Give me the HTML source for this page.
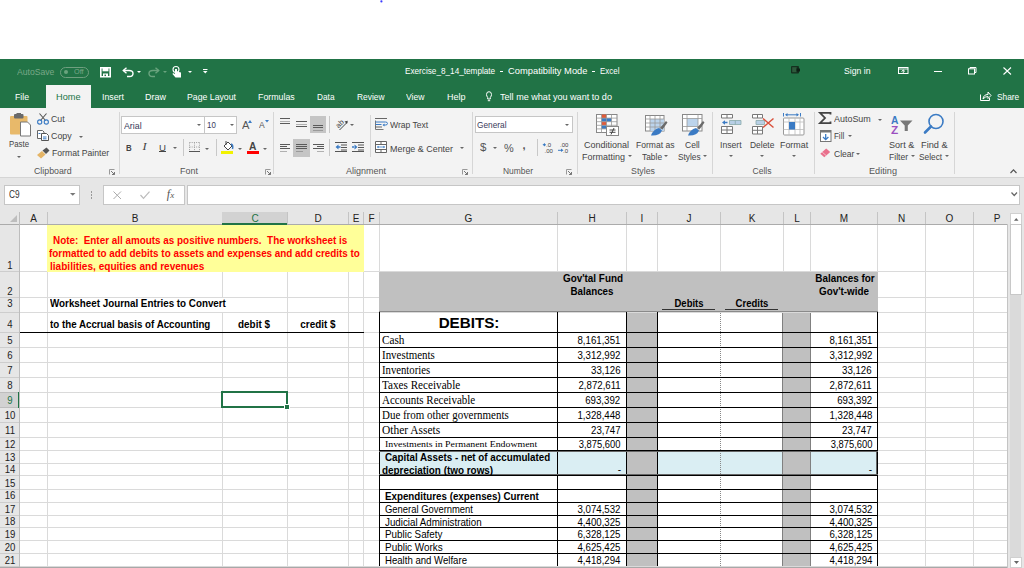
<!DOCTYPE html>
<html><head><meta charset="utf-8"><style>
html,body{margin:0;padding:0;width:1024px;height:568px;overflow:hidden;background:#fff;position:relative}
</style></head><body>
<svg style="position:absolute;left:379px;top:0px;overflow:visible" width="5" height="4" viewBox="0 0 5 4"><circle cx="2.4" cy="1.45" r="1.1" fill="#3a3aff"/></svg>
<div style="position:absolute;left:0px;top:59px;width:1024px;height:49px;background:#217346"></div>
<div style="position:absolute;left:17.3px;top:67.30px;font-family:'Liberation Sans', sans-serif;font-weight:normal;font-size:9.8px;line-height:9.8px;color:#7aa888;white-space:nowrap;transform:scaleX(0.8800);transform-origin:left top;">AutoSave</div>
<div style="position:absolute;left:60px;top:66.5px;width:28.5px;height:11px;border:1px solid #6f9f7f;border-radius:6px;box-sizing:border-box"></div>
<div style="position:absolute;left:64px;top:70px;width:4px;height:4px;background:#6aa37e;border-radius:50%"></div>
<div style="position:absolute;left:74px;top:68.00px;font-family:'Liberation Sans', sans-serif;font-weight:normal;font-size:7.8px;line-height:7.8px;color:#7aa888;white-space:nowrap;transform:scaleX(0.9357);transform-origin:left top;">Off</div>
<div style="position:absolute;left:404.6px;top:65.90px;font-family:'Liberation Sans', sans-serif;font-weight:normal;font-size:9.8px;line-height:9.8px;color:#fff;white-space:nowrap;transform:scaleX(0.8362);transform-origin:left top;">Exercise_8_14_template</div>
<div style="position:absolute;left:499.8px;top:71px;width:3px;height:1px;background:#fff"></div>
<div style="position:absolute;left:507.6px;top:65.90px;font-family:'Liberation Sans', sans-serif;font-weight:normal;font-size:9.8px;line-height:9.8px;color:#fff;white-space:nowrap;transform:scaleX(0.9540);transform-origin:left top;">Compatibility Mode</div>
<div style="position:absolute;left:592px;top:71px;width:3px;height:1px;background:#fff"></div>
<div style="position:absolute;left:599.6px;top:65.90px;font-family:'Liberation Sans', sans-serif;font-weight:normal;font-size:9.8px;line-height:9.8px;color:#fff;white-space:nowrap;transform:scaleX(0.8095);transform-origin:left top;">Excel</div>
<div style="position:absolute;left:844.3px;top:66.00px;font-family:'Liberation Sans', sans-serif;font-weight:normal;font-size:9.8px;line-height:9.8px;color:#fff;white-space:nowrap;transform:scaleX(0.8843);transform-origin:left top;">Sign in</div>
<div style="position:absolute;left:15px;top:92.07px;font-family:'Liberation Sans', sans-serif;font-weight:normal;font-size:9.6px;line-height:9.6px;color:#fff;white-space:nowrap;transform:scaleX(0.9050);transform-origin:left top;">File</div>
<div style="position:absolute;left:102px;top:92.07px;font-family:'Liberation Sans', sans-serif;font-weight:normal;font-size:9.6px;line-height:9.6px;color:#fff;white-space:nowrap;transform:scaleX(0.9163);transform-origin:left top;">Insert</div>
<div style="position:absolute;left:145px;top:92.07px;font-family:'Liberation Sans', sans-serif;font-weight:normal;font-size:9.6px;line-height:9.6px;color:#fff;white-space:nowrap;transform:scaleX(0.9374);transform-origin:left top;">Draw</div>
<div style="position:absolute;left:187px;top:92.07px;font-family:'Liberation Sans', sans-serif;font-weight:normal;font-size:9.6px;line-height:9.6px;color:#fff;white-space:nowrap;transform:scaleX(0.9089);transform-origin:left top;">Page Layout</div>
<div style="position:absolute;left:258px;top:92.07px;font-family:'Liberation Sans', sans-serif;font-weight:normal;font-size:9.6px;line-height:9.6px;color:#fff;white-space:nowrap;transform:scaleX(0.9173);transform-origin:left top;">Formulas</div>
<div style="position:absolute;left:316.5px;top:92.07px;font-family:'Liberation Sans', sans-serif;font-weight:normal;font-size:9.6px;line-height:9.6px;color:#fff;white-space:nowrap;transform:scaleX(0.8630);transform-origin:left top;">Data</div>
<div style="position:absolute;left:356.5px;top:92.07px;font-family:'Liberation Sans', sans-serif;font-weight:normal;font-size:9.6px;line-height:9.6px;color:#fff;white-space:nowrap;transform:scaleX(0.8736);transform-origin:left top;">Review</div>
<div style="position:absolute;left:405.5px;top:92.07px;font-family:'Liberation Sans', sans-serif;font-weight:normal;font-size:9.6px;line-height:9.6px;color:#fff;white-space:nowrap;transform:scaleX(0.8965);transform-origin:left top;">View</div>
<div style="position:absolute;left:446.5px;top:92.07px;font-family:'Liberation Sans', sans-serif;font-weight:normal;font-size:9.6px;line-height:9.6px;color:#fff;white-space:nowrap;transform:scaleX(0.9370);transform-origin:left top;">Help</div>
<div style="position:absolute;left:46px;top:85px;width:45px;height:23px;background:#f3f3f3"></div>
<div style="position:absolute;left:55.5px;top:92.07px;font-family:'Liberation Sans', sans-serif;font-weight:normal;font-size:9.6px;line-height:9.6px;color:#217346;white-space:nowrap;transform:scaleX(0.9567);transform-origin:left top;">Home</div>
<div style="position:absolute;left:500px;top:92.07px;font-family:'Liberation Sans', sans-serif;font-weight:normal;font-size:9.6px;line-height:9.6px;color:#fff;white-space:nowrap;transform:scaleX(0.9454);transform-origin:left top;">Tell me what you want to do</div>
<div style="position:absolute;left:996.8px;top:91.87px;font-family:'Liberation Sans', sans-serif;font-weight:normal;font-size:9.6px;line-height:9.6px;color:#fff;white-space:nowrap;transform:scaleX(0.8666);transform-origin:left top;">Share</div>
<div style="position:absolute;left:0px;top:108px;width:1024px;height:69px;background:#f3f3f3"></div>
<div style="position:absolute;left:0px;top:177px;width:1024px;height:1px;background:#d5d5d5"></div>
<div style="position:absolute;left:118.5px;top:112px;width:1px;height:62px;background:#d6d6d6"></div>
<div style="position:absolute;left:273px;top:112px;width:1px;height:62px;background:#d6d6d6"></div>
<div style="position:absolute;left:471.5px;top:112px;width:1px;height:62px;background:#d6d6d6"></div>
<div style="position:absolute;left:576.5px;top:112px;width:1px;height:62px;background:#d6d6d6"></div>
<div style="position:absolute;left:711.5px;top:112px;width:1px;height:62px;background:#d6d6d6"></div>
<div style="position:absolute;left:813.5px;top:112px;width:1px;height:62px;background:#d6d6d6"></div>
<div style="position:absolute;left:953.5px;top:112px;width:1px;height:62px;background:#d6d6d6"></div>
<div style="position:absolute;left:369.5px;top:115px;width:1px;height:42px;background:#d6d6d6"></div>
<div style="position:absolute;left:34px;top:166.51px;font-family:'Liberation Sans', sans-serif;font-weight:normal;font-size:9.2px;line-height:9.2px;color:#555;white-space:nowrap;transform:scaleX(0.9573);transform-origin:left top;">Clipboard</div>
<div style="position:absolute;left:-110.6px;width:600px;top:166.51px;font-family:'Liberation Sans', sans-serif;font-weight:normal;font-size:9.2px;line-height:9.2px;color:#555;white-space:nowrap;text-align:center;transform:scaleX(0.9723);transform-origin:center top;">Font</div>
<div style="position:absolute;left:66px;width:600px;top:166.51px;font-family:'Liberation Sans', sans-serif;font-weight:normal;font-size:9.2px;line-height:9.2px;color:#555;white-space:nowrap;text-align:center;transform:scaleX(0.9777);transform-origin:center top;">Alignment</div>
<div style="position:absolute;left:218px;width:600px;top:166.51px;font-family:'Liberation Sans', sans-serif;font-weight:normal;font-size:9.2px;line-height:9.2px;color:#555;white-space:nowrap;text-align:center;transform:scaleX(0.9168);transform-origin:center top;">Number</div>
<div style="position:absolute;left:343px;width:600px;top:166.51px;font-family:'Liberation Sans', sans-serif;font-weight:normal;font-size:9.2px;line-height:9.2px;color:#555;white-space:nowrap;text-align:center;transform:scaleX(0.9580);transform-origin:center top;">Styles</div>
<div style="position:absolute;left:462px;width:600px;top:166.51px;font-family:'Liberation Sans', sans-serif;font-weight:normal;font-size:9.2px;line-height:9.2px;color:#555;white-space:nowrap;text-align:center;transform:scaleX(0.9291);transform-origin:center top;">Cells</div>
<div style="position:absolute;left:583px;width:600px;top:166.51px;font-family:'Liberation Sans', sans-serif;font-weight:normal;font-size:9.2px;line-height:9.2px;color:#555;white-space:nowrap;text-align:center;transform:scaleX(0.9953);transform-origin:center top;">Editing</div>
<svg style="position:absolute;left:109px;top:168.5px;overflow:visible" width="6" height="6" viewBox="0 0 6 6"><path d="M0.5 5.5 V0.5 H5.5" fill="none" stroke="#999" stroke-width="1"/><path d="M2 2 L5.5 5.5 M5.5 3 V5.5 H3" fill="none" stroke="#777" stroke-width="1"/></svg>
<svg style="position:absolute;left:265px;top:168.5px;overflow:visible" width="6" height="6" viewBox="0 0 6 6"><path d="M0.5 5.5 V0.5 H5.5" fill="none" stroke="#999" stroke-width="1"/><path d="M2 2 L5.5 5.5 M5.5 3 V5.5 H3" fill="none" stroke="#777" stroke-width="1"/></svg>
<svg style="position:absolute;left:462px;top:168.5px;overflow:visible" width="6" height="6" viewBox="0 0 6 6"><path d="M0.5 5.5 V0.5 H5.5" fill="none" stroke="#999" stroke-width="1"/><path d="M2 2 L5.5 5.5 M5.5 3 V5.5 H3" fill="none" stroke="#777" stroke-width="1"/></svg>
<svg style="position:absolute;left:566px;top:168.5px;overflow:visible" width="6" height="6" viewBox="0 0 6 6"><path d="M0.5 5.5 V0.5 H5.5" fill="none" stroke="#999" stroke-width="1"/><path d="M2 2 L5.5 5.5 M5.5 3 V5.5 H3" fill="none" stroke="#777" stroke-width="1"/></svg>
<svg style="position:absolute;left:9px;top:113px;overflow:visible" width="23" height="24" viewBox="0 0 23 24"><rect x="1" y="3" width="17.5" height="18.5" rx="1" fill="#e8b96a"/><rect x="5" y="1" width="9.5" height="4.5" rx="1" fill="#6a6a6a"/><rect x="7.5" y="0" width="4.5" height="2" fill="#6a6a6a"/><path d="M11.5 9 H18.5 L21.5 12 V23 H11.5 Z" fill="#fff" stroke="#777" stroke-width="1"/></svg>
<div style="position:absolute;left:9px;top:140.18px;font-family:'Liberation Sans', sans-serif;font-weight:normal;font-size:9px;line-height:9px;color:#444;white-space:nowrap;transform:scaleX(0.8690);transform-origin:left top;">Paste</div>
<svg style="position:absolute;left:16.5px;top:155.5px" width="4" height="2.5"><path d="M0 0 L4 0 L2.0 2.0 Z" fill="#666"/></svg>
<svg style="position:absolute;left:37px;top:112.5px;overflow:visible" width="12" height="11.5" viewBox="0 0 12 11.5"><path d="M2.5 0.5 L8.5 7.5 M9.5 0.5 L3.5 7.5" stroke="#555" stroke-width="1.1" fill="none"/><circle cx="2.7" cy="9" r="2.1" fill="none" stroke="#3b7bc4" stroke-width="1.1"/><circle cx="9.3" cy="9" r="2.1" fill="none" stroke="#3b7bc4" stroke-width="1.1"/></svg>
<div style="position:absolute;left:51.2px;top:113.94px;font-family:'Liberation Sans', sans-serif;font-weight:normal;font-size:9.4px;line-height:9.4px;color:#444;white-space:nowrap;transform:scaleX(0.9366);transform-origin:left top;">Cut</div>
<svg style="position:absolute;left:37px;top:130px;overflow:visible" width="12" height="11" viewBox="0 0 12 11"><path d="M0.5 0.5 H5.5 L7 2 V8.5 H0.5 Z" fill="#fff" stroke="#666" stroke-width="1"/><path d="M4.5 3.5 H9.5 L11.5 5.5 V10.5 H4.5 Z" fill="#fff" stroke="#555" stroke-width="1"/><path d="M1.5 3.5 H3.5 M6 7 H9.5 M6 8.8 H9.5" stroke="#3b7bc4" stroke-width="1"/></svg>
<div style="position:absolute;left:51.2px;top:130.74px;font-family:'Liberation Sans', sans-serif;font-weight:normal;font-size:9.4px;line-height:9.4px;color:#444;white-space:nowrap;transform:scaleX(0.9433);transform-origin:left top;">Copy</div>
<svg style="position:absolute;left:79.0px;top:135.5px" width="4" height="2.5"><path d="M0 0 L4 0 L2.0 2.0 Z" fill="#666"/></svg>
<svg style="position:absolute;left:36.5px;top:147px;overflow:visible" width="13" height="11.5" viewBox="0 0 13 11.5"><path d="M0 8 L5 4 L8.5 7.5 L4 11.5 Z" fill="#e5b567"/><path d="M5.5 3.5 L9.5 0.5 L12.5 3.5 L9 7 Z" fill="#555"/></svg>
<div style="position:absolute;left:51.6px;top:148.44px;font-family:'Liberation Sans', sans-serif;font-weight:normal;font-size:9.4px;line-height:9.4px;color:#444;white-space:nowrap;transform:scaleX(0.9217);transform-origin:left top;">Format Painter</div>
<div style="position:absolute;left:121px;top:116px;width:116px;height:17.5px;background:#fff;border:1px solid #c6c6c6;box-sizing:border-box"></div>
<div style="position:absolute;left:204px;top:116px;width:1px;height:17.5px;background:#c6c6c6"></div>
<div style="position:absolute;left:124px;top:120.67px;font-family:'Liberation Sans', sans-serif;font-weight:normal;font-size:9.6px;line-height:9.6px;color:#3a3a5a;white-space:nowrap;transform:scaleX(0.9164);transform-origin:left top;">Arial</div>
<svg style="position:absolute;left:197.0px;top:123.6px" width="4" height="2.5"><path d="M0 0 L4 0 L2.0 2.0 Z" fill="#666"/></svg>
<div style="position:absolute;left:207.1px;top:120.47px;font-family:'Liberation Sans', sans-serif;font-weight:normal;font-size:9.6px;line-height:9.6px;color:#3a3a5a;white-space:nowrap;transform:scaleX(0.8241);transform-origin:left top;">10</div>
<svg style="position:absolute;left:229.5px;top:123.6px" width="4" height="2.5"><path d="M0 0 L4 0 L2.0 2.0 Z" fill="#666"/></svg>
<div style="position:absolute;left:241.6px;top:120.11px;font-family:'Liberation Sans', sans-serif;font-weight:normal;font-size:10.5px;line-height:10.5px;color:#555;white-space:nowrap;transform:scaleX(1.0566);transform-origin:left top;">A</div>
<svg style="position:absolute;left:248px;top:119.5px;overflow:visible" width="4" height="3" viewBox="0 0 4 3"><path d="M0 3 L4 3 L2 0 Z" fill="#3b7bc4"/></svg>
<div style="position:absolute;left:258.6px;top:122.06px;font-family:'Liberation Sans', sans-serif;font-weight:normal;font-size:8.2px;line-height:8.2px;color:#555;white-space:nowrap;transform:scaleX(1.0421);transform-origin:left top;">A</div>
<svg style="position:absolute;left:265px;top:119.5px;overflow:visible" width="4" height="2.5" viewBox="0 0 4 2.5"><path d="M0 0 L4 0 L2 2.5 Z" fill="#3b7bc4"/></svg>
<div style="position:absolute;left:126.4px;top:142.76px;font-family:'Liberation Sans', sans-serif;font-weight:bold;font-size:9.5px;line-height:9.5px;color:#444;white-space:nowrap;transform:scaleX(0.8308);transform-origin:left top;">B</div>
<div style="position:absolute;left:143px;top:142.84px;font-family:'Liberation Serif', serif;font-weight:normal;font-size:9.5px;line-height:9.5px;color:#444;white-space:nowrap;font-style:italic;transform:scaleX(1.3)">I</div>
<div style="position:absolute;left:159px;top:142.76px;font-family:'Liberation Sans', sans-serif;font-weight:normal;font-size:9.5px;line-height:9.5px;color:#444;white-space:nowrap;transform:scaleX(1.0203);transform-origin:left top;">U</div>
<div style="position:absolute;left:159px;top:151px;width:7px;height:1px;background:#444"></div>
<svg style="position:absolute;left:173.0px;top:147px" width="4" height="2.5"><path d="M0 0 L4 0 L2.0 2.0 Z" fill="#666"/></svg>
<div style="position:absolute;left:183.4px;top:139px;width:1px;height:17px;background:#c8c8c8"></div>
<svg style="position:absolute;left:189px;top:142px;overflow:visible" width="11" height="10" viewBox="0 0 11 10"><path d="M0.5 0.5 H10.5 M0.5 0.5 V9 M10.5 0.5 V9 M5.5 0.5 V9 M0.5 5 H10.5" stroke="#999" stroke-width="0.9" stroke-dasharray="1 1.2" fill="none"/><path d="M0 9.5 H11" stroke="#555" stroke-width="1"/></svg>
<svg style="position:absolute;left:205.0px;top:147.5px" width="4" height="2.5"><path d="M0 0 L4 0 L2.0 2.0 Z" fill="#666"/></svg>
<div style="position:absolute;left:215.5px;top:139px;width:1px;height:17px;background:#c8c8c8"></div>
<svg style="position:absolute;left:221px;top:141px;overflow:visible" width="13" height="10" viewBox="0 0 13 10"><path d="M3 5 L7 1 L11 5 L7 9 Z" fill="#fff" stroke="#444" stroke-width="1"/><path d="M5 0 V4" stroke="#444" stroke-width="1"/><path d="M10 3 Q12.5 4 11.5 8" stroke="#3b7bc4" stroke-width="1.5" fill="none"/></svg>
<div style="position:absolute;left:221px;top:150.7px;width:12px;height:3px;background:#f2f200"></div>
<svg style="position:absolute;left:237.5px;top:147.5px" width="4" height="2.5"><path d="M0 0 L4 0 L2.0 2.0 Z" fill="#666"/></svg>
<div style="position:absolute;left:249.2px;top:141.94px;font-family:'Liberation Sans', sans-serif;font-weight:bold;font-size:10px;line-height:10px;color:#444;white-space:nowrap;transform:scaleX(1.0247);transform-origin:left top;">A</div>
<div style="position:absolute;left:246.7px;top:150.7px;width:12.2px;height:3px;background:#ff0000"></div>
<svg style="position:absolute;left:263.0px;top:147.5px" width="4" height="2.5"><path d="M0 0 L4 0 L2.0 2.0 Z" fill="#666"/></svg>
<div style="position:absolute;left:279.6px;top:118px;width:10.5px;height:1px;background:#5a5a5a"></div>
<div style="position:absolute;left:279.6px;top:120.5px;width:10.5px;height:1px;background:#b0b0b0"></div>
<div style="position:absolute;left:279.6px;top:123px;width:10.5px;height:1px;background:#5a5a5a"></div>
<div style="position:absolute;left:296px;top:121px;width:10.5px;height:1px;background:#5a5a5a"></div>
<div style="position:absolute;left:296px;top:123.5px;width:10.5px;height:1px;background:#b0b0b0"></div>
<div style="position:absolute;left:296px;top:126px;width:10.5px;height:1px;background:#5a5a5a"></div>
<div style="position:absolute;left:310px;top:116px;width:16px;height:17px;background:#c5c5c5"></div>
<div style="position:absolute;left:312.5px;top:125px;width:10.5px;height:1px;background:#5a5a5a"></div>
<div style="position:absolute;left:312.5px;top:127.3px;width:10.5px;height:1px;background:#5a5a5a"></div>
<div style="position:absolute;left:312.5px;top:129.8px;width:10.5px;height:1px;background:#9a9a9a"></div>
<div style="position:absolute;left:329.4px;top:116px;width:1px;height:17px;background:#c8c8c8"></div>
<svg style="position:absolute;left:335px;top:118.5px;overflow:visible" width="13" height="11" viewBox="0 0 13 11"><text x="0.3" y="7.3" font-family="Liberation Sans" font-size="7.5" fill="#444" transform="rotate(-45 4.5 4.5)">ab</text><path d="M4.5 11 L12 3.5" stroke="#444" stroke-width="1"/><path d="M9.5 2.5 L12.8 1.8 L12 5 Z" fill="#444"/></svg>
<svg style="position:absolute;left:350.3px;top:124px" width="4" height="2.5"><path d="M0 0 L4 0 L2.0 2.0 Z" fill="#666"/></svg>
<div style="position:absolute;left:279.6px;top:144px;width:10.5px;height:1px;background:#5a5a5a"></div>
<div style="position:absolute;left:279.6px;top:146px;width:7px;height:1px;background:#5a5a5a"></div>
<div style="position:absolute;left:279.6px;top:148.2px;width:10.5px;height:1px;background:#5a5a5a"></div>
<div style="position:absolute;left:279.6px;top:150.5px;width:7px;height:1px;background:#b0b0b0"></div>
<div style="position:absolute;left:293px;top:139px;width:17px;height:17.5px;background:#c5c5c5"></div>
<div style="position:absolute;left:296px;top:144px;width:10.5px;height:1px;background:#5a5a5a"></div>
<div style="position:absolute;left:296px;top:146px;width:10.5px;height:1px;background:#5a5a5a"></div>
<div style="position:absolute;left:296px;top:148.2px;width:10.5px;height:1px;background:#5a5a5a"></div>
<div style="position:absolute;left:296px;top:150.5px;width:7px;height:1px;background:#9a9a9a"></div>
<div style="position:absolute;left:313px;top:144px;width:10.5px;height:1px;background:#5a5a5a"></div>
<div style="position:absolute;left:313px;top:148.2px;width:10.5px;height:1px;background:#5a5a5a"></div>
<div style="position:absolute;left:316.5px;top:146px;width:7px;height:1px;background:#5a5a5a"></div>
<div style="position:absolute;left:316.5px;top:150.5px;width:7px;height:1px;background:#b0b0b0"></div>
<div style="position:absolute;left:329.4px;top:139px;width:1px;height:17px;background:#c8c8c8"></div>
<svg style="position:absolute;left:335px;top:142px;overflow:visible" width="13" height="10" viewBox="0 0 13 10"><path d="M0 0.5 H12 M6 3 H12 M6 5.5 H12 M6 8 H12 M0 9.5 H12" stroke="#555" stroke-width="1"/><path d="M0.5 5 L3.5 2.5 V7.5 Z M3 4.2 H5.5 V5.8 H3 Z" fill="#3b7bc4"/></svg>
<svg style="position:absolute;left:351.5px;top:142px;overflow:visible" width="13" height="10" viewBox="0 0 13 10"><path d="M0 0.5 H12 M6 3 H12 M6 5.5 H12 M6 8 H12 M0 9.5 H12" stroke="#555" stroke-width="1"/><path d="M5.5 5 L2.5 2.5 V7.5 Z M0 4.2 H3 V5.8 H0 Z" fill="#3b7bc4"/></svg>
<svg style="position:absolute;left:375px;top:118px;overflow:visible" width="13" height="12" viewBox="0 0 13 12"><path d="M0.5 2.5 V11.5 H8.5" fill="none" stroke="#777" stroke-width="1"/><path d="M0 0.5 H12 M0 9 H7" stroke="#666" stroke-width="1"/><path d="M0.5 4 H10.5 M0.5 6.5 H6.5" stroke="#3b7bc4" stroke-width="1"/><path d="M10.5 4 Q12.5 4 12.5 5.5 Q12.5 7 10.5 7 H8.5" stroke="#3b7bc4" stroke-width="1" fill="none"/><path d="M7.5 7 L9.5 5.5 V8.5 Z" fill="#3b7bc4"/></svg>
<div style="position:absolute;left:389.5px;top:119.84px;font-family:'Liberation Sans', sans-serif;font-weight:normal;font-size:9.4px;line-height:9.4px;color:#444;white-space:nowrap;transform:scaleX(0.9126);transform-origin:left top;">Wrap Text</div>
<svg style="position:absolute;left:375px;top:141px;overflow:visible" width="12" height="12" viewBox="0 0 12 12"><path d="M0.5 0.5 H11.5 V11.5 H0.5 Z" fill="#fff" stroke="#666" stroke-width="1"/><path d="M0.5 3.5 H11.5 M0.5 8.5 H11.5 M6 0.5 V3.5 M6 8.5 V11.5" stroke="#666" stroke-width="1"/><path d="M2.5 6 H9.5" stroke="#3b7bc4" stroke-width="0.8"/><path d="M1.8 6 L3.6 4.8 V7.2 Z M10.2 6 L8.4 4.8 V7.2 Z" fill="#3b7bc4"/></svg>
<div style="position:absolute;left:389.7px;top:143.54px;font-family:'Liberation Sans', sans-serif;font-weight:normal;font-size:9.4px;line-height:9.4px;color:#444;white-space:nowrap;transform:scaleX(0.9525);transform-origin:left top;">Merge &amp; Center</div>
<svg style="position:absolute;left:460.0px;top:147.4px" width="4" height="2.5"><path d="M0 0 L4 0 L2.0 2.0 Z" fill="#666"/></svg>
<div style="position:absolute;left:474.5px;top:116.3px;width:98.2px;height:17px;background:#fff;border:1px solid #c6c6c6;box-sizing:border-box"></div>
<div style="position:absolute;left:477px;top:120.37px;font-family:'Liberation Sans', sans-serif;font-weight:normal;font-size:9.6px;line-height:9.6px;color:#3a3a5a;white-space:nowrap;transform:scaleX(0.8637);transform-origin:left top;">General</div>
<svg style="position:absolute;left:565.2px;top:123.6px" width="4" height="2.5"><path d="M0 0 L4 0 L2.0 2.0 Z" fill="#666"/></svg>
<div style="position:absolute;left:480.2px;top:142.29px;font-family:'Liberation Sans', sans-serif;font-weight:normal;font-size:11px;line-height:11px;color:#555;white-space:nowrap;transform:scaleX(1.0461);transform-origin:left top;">$</div>
<svg style="position:absolute;left:493.2px;top:147.4px" width="4" height="2.5"><path d="M0 0 L4 0 L2.0 2.0 Z" fill="#666"/></svg>
<div style="position:absolute;left:503.8px;top:143.64px;font-family:'Liberation Sans', sans-serif;font-weight:normal;font-size:10px;line-height:10px;color:#555;white-space:nowrap;transform:scaleX(1.0909);transform-origin:left top;">%</div>
<div style="position:absolute;left:522.5px;top:140.29px;font-family:'Liberation Sans', sans-serif;font-weight:bold;font-size:11px;line-height:11px;color:#555;white-space:nowrap;">,</div>
<div style="position:absolute;left:536.6px;top:139px;width:1px;height:17px;background:#c8c8c8"></div>
<svg style="position:absolute;left:541.5px;top:142px;overflow:visible" width="12" height="11" viewBox="0 0 12 11"><text x="4" y="5" font-family="Liberation Sans" font-size="6" fill="#444">.0</text><text x="2.5" y="10.5" font-family="Liberation Sans" font-size="6" fill="#444">.00</text><path d="M0.5 2.8 L3 1 V4.6 Z" fill="#3b7bc4"/><path d="M2 2.8 H4" stroke="#3b7bc4"/></svg>
<svg style="position:absolute;left:558px;top:142px;overflow:visible" width="12" height="11" viewBox="0 0 12 11"><text x="2" y="5" font-family="Liberation Sans" font-size="6" fill="#444">.00</text><text x="5" y="10.5" font-family="Liberation Sans" font-size="6" fill="#444">.0</text><path d="M5.5 8.3 L3 6.5 V10 Z" fill="#3b7bc4"/><path d="M0 8.3 H4" stroke="#3b7bc4"/></svg>
<svg style="position:absolute;left:596px;top:114px;overflow:visible" width="23" height="22" viewBox="0 0 23 22"><rect x="0.5" y="0.5" width="20.5" height="18" fill="#fff" stroke="#888" stroke-width="1"/><rect x="5.5" y="0.5" width="5" height="3.6" fill="#e05b3a"/><rect x="5.5" y="4.1" width="10" height="3.6" fill="#3b7bc4"/><rect x="5.5" y="7.7" width="5" height="3.6" fill="#e05b3a"/><rect x="5.5" y="11.3" width="5" height="3.6" fill="#3b7bc4"/><path d="M0.5 4.1 H21 M0.5 7.7 H21 M0.5 11.3 H21 M0.5 14.9 H21 M5.5 0.5 V18.5 M10.5 0.5 V18.5 M15.5 0.5 V18.5" stroke="#999" stroke-width="0.8" fill="none"/><rect x="10.5" y="12.5" width="12" height="9" fill="#fff" stroke="#888" stroke-width="1"/><path d="M13.5 16 H19.5 M13.5 18.3 H19.5 M18 14 L15 20.5" stroke="#333" stroke-width="0.9"/></svg>
<div style="position:absolute;left:583.9px;top:140.14px;font-family:'Liberation Sans', sans-serif;font-weight:normal;font-size:9.4px;line-height:9.4px;color:#444;white-space:nowrap;transform:scaleX(0.9589);transform-origin:left top;">Conditional</div>
<div style="position:absolute;left:582px;top:151.84px;font-family:'Liberation Sans', sans-serif;font-weight:normal;font-size:9.4px;line-height:9.4px;color:#444;white-space:nowrap;transform:scaleX(0.9571);transform-origin:left top;">Formatting</div>
<svg style="position:absolute;left:627.5px;top:155px" width="4" height="2.5"><path d="M0 0 L4 0 L2.0 2.0 Z" fill="#666"/></svg>
<svg style="position:absolute;left:644.5px;top:115px;overflow:visible" width="23" height="22" viewBox="0 0 23 22"><rect x="0.5" y="0.5" width="18.5" height="15.5" fill="#fff" stroke="#888" stroke-width="1"/><rect x="5" y="4" width="14" height="12" fill="#bcd4ec"/><path d="M0.5 4 H19 M0.5 8 H19 M0.5 12 H19 M5 0.5 V16 M10 0.5 V16 M15 0.5 V16" stroke="#999" stroke-width="0.8" fill="none"/><path d="M15 13 L21 6 L22.5 7.5 L17.5 14.5 Z" fill="#6a6a6a"/><path d="M6 20.5 Q8 14.5 14 13 L17 15.5 Q15 21 6 20.5 Z" fill="#3b7bc4"/></svg>
<div style="position:absolute;left:635.6px;top:140.14px;font-family:'Liberation Sans', sans-serif;font-weight:normal;font-size:9.4px;line-height:9.4px;color:#444;white-space:nowrap;transform:scaleX(0.9123);transform-origin:left top;">Format as</div>
<div style="position:absolute;left:641.7px;top:151.84px;font-family:'Liberation Sans', sans-serif;font-weight:normal;font-size:9.4px;line-height:9.4px;color:#444;white-space:nowrap;transform:scaleX(0.8944);transform-origin:left top;">Table</div>
<svg style="position:absolute;left:663.5px;top:155px" width="4" height="2.5"><path d="M0 0 L4 0 L2.0 2.0 Z" fill="#666"/></svg>
<svg style="position:absolute;left:682px;top:114px;overflow:visible" width="23" height="22" viewBox="0 0 23 22"><rect x="0.5" y="0.5" width="19.5" height="16.5" fill="#fff" stroke="#888" stroke-width="1"/><rect x="5" y="4.5" width="11" height="8" fill="#bcd4ec"/><path d="M0.5 4.5 H20 M0.5 12.5 H20 M5 0.5 V17 M16 0.5 V17" stroke="#999" stroke-width="0.8" fill="none"/><path d="M15 14 L21 7 L22.5 8.5 L17.5 15.5 Z" fill="#6a6a6a"/><path d="M6 21.5 Q8 15.5 14 14 L17 16.5 Q15 22 6 21.5 Z" fill="#3b7bc4"/></svg>
<div style="position:absolute;left:684.7px;top:140.14px;font-family:'Liberation Sans', sans-serif;font-weight:normal;font-size:9.4px;line-height:9.4px;color:#444;white-space:nowrap;transform:scaleX(0.9139);transform-origin:left top;">Cell</div>
<div style="position:absolute;left:677.7px;top:151.84px;font-family:'Liberation Sans', sans-serif;font-weight:normal;font-size:9.4px;line-height:9.4px;color:#444;white-space:nowrap;transform:scaleX(0.8868);transform-origin:left top;">Styles</div>
<svg style="position:absolute;left:702.5px;top:155px" width="4" height="2.5"><path d="M0 0 L4 0 L2.0 2.0 Z" fill="#666"/></svg>
<svg style="position:absolute;left:721px;top:114px;overflow:visible" width="21" height="21" viewBox="0 0 21 21"><path d="M0.5 0.5 H11.5 V4 H0.5 Z M6 0.5 V4" fill="#fff" stroke="#777" stroke-width="1"/><path d="M8.5 6.5 H20 V10.5 H8.5 Z" fill="#b8cfe6" stroke="#8aa" stroke-width="0.8"/><path d="M14.3 6.5 V10.5" stroke="#8aa" stroke-width="0.8"/><path d="M1 8.5 L4 6.3 V10.7 Z M3.5 7.8 H6.5 V9.2 H3.5 Z" fill="#3b7bc4"/><path d="M0.5 12.5 H11.5 V19.5 H0.5 Z M6 12.5 V19.5 M0.5 16 H11.5" fill="#fff" stroke="#777" stroke-width="1"/></svg>
<div style="position:absolute;left:719.6px;top:139.74px;font-family:'Liberation Sans', sans-serif;font-weight:normal;font-size:9.4px;line-height:9.4px;color:#444;white-space:nowrap;transform:scaleX(0.9188);transform-origin:left top;">Insert</div>
<svg style="position:absolute;left:728.5px;top:155.2px" width="4" height="2.5"><path d="M0 0 L4 0 L2.0 2.0 Z" fill="#666"/></svg>
<svg style="position:absolute;left:752px;top:114px;overflow:visible" width="23" height="21" viewBox="0 0 23 21"><path d="M0.5 0.5 H10.5 V4 H0.5 Z M5.5 0.5 V4" fill="#fff" stroke="#777" stroke-width="1"/><path d="M4 6.5 H12.5 V10.5 H4 Z" fill="#b8cfe6" stroke="#8aa" stroke-width="0.8"/><path d="M0.5 12.5 H10.5 V20 H0.5 Z M5.5 12.5 V20 M0.5 16.3 H10.5" fill="#fff" stroke="#777" stroke-width="1"/><path d="M11 4.5 L21.5 13.5 M21.5 4.5 L11 13.5" stroke="#d9513c" stroke-width="1.5"/></svg>
<div style="position:absolute;left:749.8px;top:139.74px;font-family:'Liberation Sans', sans-serif;font-weight:normal;font-size:9.4px;line-height:9.4px;color:#444;white-space:nowrap;transform:scaleX(0.8980);transform-origin:left top;">Delete</div>
<svg style="position:absolute;left:759.8px;top:155.2px" width="4" height="2.5"><path d="M0 0 L4 0 L2.0 2.0 Z" fill="#666"/></svg>
<svg style="position:absolute;left:783px;top:113px;overflow:visible" width="22" height="23" viewBox="0 0 22 23"><path d="M0.5 0 V3.5 M17.5 0 V3.5" stroke="#3b7bc4" stroke-width="1"/><path d="M3 1.8 H15" stroke="#3b7bc4" stroke-width="1"/><path d="M2 1.8 L4.5 0 V3.6 Z M16 1.8 L13.5 0 V3.6 Z" fill="#3b7bc4"/><rect x="0.5" y="5" width="20.5" height="17" rx="1" fill="#fff" stroke="#999" stroke-width="1"/><path d="M0.5 9 H21 M0.5 16.5 H21 M6 5 V22 M12 5 V22 M17 5 V22" stroke="#bbb" stroke-width="0.8"/><rect x="6" y="9" width="6" height="7.5" fill="#3b7bc4"/></svg>
<div style="position:absolute;left:779.8px;top:139.74px;font-family:'Liberation Sans', sans-serif;font-weight:normal;font-size:9.4px;line-height:9.4px;color:#444;white-space:nowrap;transform:scaleX(0.9472);transform-origin:left top;">Format</div>
<svg style="position:absolute;left:792.3px;top:155.2px" width="4" height="2.5"><path d="M0 0 L4 0 L2.0 2.0 Z" fill="#666"/></svg>
<svg style="position:absolute;left:819px;top:112px;overflow:visible" width="12.5" height="12" viewBox="0 0 12.5 12"><path d="M11.5 2.5 V0.8 H1 L6 6 L1 11.2 H11.5 V9.5" fill="none" stroke="#444" stroke-width="1.8" stroke-linejoin="miter"/></svg>
<div style="position:absolute;left:833.8px;top:114.14px;font-family:'Liberation Sans', sans-serif;font-weight:normal;font-size:9.4px;line-height:9.4px;color:#444;white-space:nowrap;transform:scaleX(0.9543);transform-origin:left top;">AutoSum</div>
<svg style="position:absolute;left:878.3px;top:118.8px" width="4" height="2.5"><path d="M0 0 L4 0 L2.0 2.0 Z" fill="#666"/></svg>
<svg style="position:absolute;left:819.5px;top:130px;overflow:visible" width="11.5" height="12" viewBox="0 0 11.5 12"><rect x="0.5" y="0.5" width="10.5" height="11" fill="#fff" stroke="#777" stroke-width="1"/><rect x="0.5" y="0.5" width="10.5" height="2" fill="#777"/><path d="M5.7 4 V9.5 M3 7 L5.7 9.7 L8.4 7" fill="none" stroke="#3b7bc4" stroke-width="1.3"/></svg>
<div style="position:absolute;left:833.8px;top:131.14px;font-family:'Liberation Sans', sans-serif;font-weight:normal;font-size:9.4px;line-height:9.4px;color:#444;white-space:nowrap;transform:scaleX(0.8495);transform-origin:left top;">Fill</div>
<svg style="position:absolute;left:847.5px;top:135.3px" width="4" height="2.5"><path d="M0 0 L4 0 L2.0 2.0 Z" fill="#666"/></svg>
<svg style="position:absolute;left:820px;top:148px;overflow:visible" width="10.5" height="9.5" viewBox="0 0 10.5 9.5"><path d="M0.3 5.8 L6.2 0.5 L10.2 4 L4.3 9.3 Z" fill="#e9708c"/><path d="M2.2 4.1 L6.2 7.6" stroke="#f7c5d0" stroke-width="0.9"/></svg>
<div style="position:absolute;left:833.8px;top:148.84px;font-family:'Liberation Sans', sans-serif;font-weight:normal;font-size:9.4px;line-height:9.4px;color:#444;white-space:nowrap;transform:scaleX(0.9126);transform-origin:left top;">Clear</div>
<svg style="position:absolute;left:855.5px;top:152.6px" width="4" height="2.5"><path d="M0 0 L4 0 L2.0 2.0 Z" fill="#666"/></svg>
<div style="position:absolute;left:890.6px;top:115.41px;font-family:'Liberation Sans', sans-serif;font-weight:bold;font-size:10.5px;line-height:10.5px;color:#3b7bc4;white-space:nowrap;transform:scaleX(0.9759);transform-origin:left top;">A</div>
<div style="position:absolute;left:890.8px;top:125.21px;font-family:'Liberation Sans', sans-serif;font-weight:bold;font-size:10.5px;line-height:10.5px;color:#9b4fc0;white-space:nowrap;transform:scaleX(1.1225);transform-origin:left top;">Z</div>
<svg style="position:absolute;left:900px;top:119.5px;overflow:visible" width="12.5" height="11.5" viewBox="0 0 12.5 11.5"><path d="M0 0.5 H12.5 L7.8 5.5 V11 H4.7 V5.5 Z" fill="#777"/></svg>
<div style="position:absolute;left:889.2px;top:139.74px;font-family:'Liberation Sans', sans-serif;font-weight:normal;font-size:9.4px;line-height:9.4px;color:#444;white-space:nowrap;transform:scaleX(0.9685);transform-origin:left top;">Sort &amp;</div>
<div style="position:absolute;left:889.2px;top:151.84px;font-family:'Liberation Sans', sans-serif;font-weight:normal;font-size:9.4px;line-height:9.4px;color:#444;white-space:nowrap;transform:scaleX(0.9143);transform-origin:left top;">Filter</div>
<svg style="position:absolute;left:910.5px;top:155px" width="4" height="2.5"><path d="M0 0 L4 0 L2.0 2.0 Z" fill="#666"/></svg>
<svg style="position:absolute;left:923px;top:113px;overflow:visible" width="22" height="21" viewBox="0 0 22 21"><circle cx="13" cy="8.5" r="7" fill="none" stroke="#3b7bc4" stroke-width="1.6"/><path d="M8 13.5 L2 19.5" stroke="#3b7bc4" stroke-width="2.6" stroke-linecap="round"/></svg>
<div style="position:absolute;left:920.6px;top:139.74px;font-family:'Liberation Sans', sans-serif;font-weight:normal;font-size:9.4px;line-height:9.4px;color:#444;white-space:nowrap;transform:scaleX(0.9828);transform-origin:left top;">Find &amp;</div>
<div style="position:absolute;left:919.3px;top:151.84px;font-family:'Liberation Sans', sans-serif;font-weight:normal;font-size:9.4px;line-height:9.4px;color:#444;white-space:nowrap;transform:scaleX(0.8880);transform-origin:left top;">Select</div>
<svg style="position:absolute;left:944.5px;top:155px" width="4" height="2.5"><path d="M0 0 L4 0 L2.0 2.0 Z" fill="#666"/></svg>
<svg style="position:absolute;left:1010px;top:169px;overflow:visible" width="7" height="4.5" viewBox="0 0 7 4.5"><path d="M0.5 4 L3.5 0.8 L6.5 4" fill="none" stroke="#555" stroke-width="1.2"/></svg>
<svg style="position:absolute;left:100.3px;top:66.7px;overflow:visible" width="11" height="10.5" viewBox="0 0 11 10.5"><path d="M0.8 0.8 H10.2 V9.7 H0.8 Z" fill="none" stroke="#fff" stroke-width="1.6"/><rect x="2.5" y="1" width="6" height="3.3" fill="#fff"/><rect x="3" y="6.5" width="5" height="3.5" fill="#fff"/><rect x="4.5" y="7.6" width="1.5" height="1.5" fill="#217346"/></svg>
<svg style="position:absolute;left:122px;top:67px;overflow:visible" width="12" height="10" viewBox="0 0 12 10"><path d="M1.5 3.5 H7 Q11 3.5 11 6.5 Q11 9.5 7.5 9.5 H5" fill="none" stroke="#fff" stroke-width="1.4"/><path d="M4.5 0.8 L1.3 3.5 L4.5 6.2" fill="none" stroke="#fff" stroke-width="1.4"/></svg>
<svg style="position:absolute;left:137.3px;top:70.8px" width="4" height="2.5"><path d="M0 0 L4 0 L2.0 2.0 Z" fill="#fff"/></svg>
<svg style="position:absolute;left:148.3px;top:67px;overflow:visible" width="12" height="10" viewBox="0 0 12 10"><path d="M10.5 3.5 H5 Q1 3.5 1 6.5 Q1 9.5 4.5 9.5 H7" fill="none" stroke="#6aa37e" stroke-width="1.4"/><path d="M7.5 0.8 L10.7 3.5 L7.5 6.2" fill="none" stroke="#6aa37e" stroke-width="1.4"/></svg>
<svg style="position:absolute;left:163.0px;top:70.8px" width="4" height="2.5"><path d="M0 0 L4 0 L2.0 2.0 Z" fill="#6aa37e"/></svg>
<svg style="position:absolute;left:172.4px;top:66.4px;overflow:visible" width="9.5" height="11.5" viewBox="0 0 9.5 11.5"><circle cx="4" cy="3.5" r="3" fill="none" stroke="#fff" stroke-width="1.1"/><path d="M3 3 V8 L1 7 L0.5 8 L3.5 11.5 H9 V6.5 L5 5.5 V3 Z" fill="#fff"/></svg>
<svg style="position:absolute;left:187.5px;top:70.8px" width="4" height="2.5"><path d="M0 0 L4 0 L2.0 2.0 Z" fill="#fff"/></svg>
<svg style="position:absolute;left:203px;top:69.3px;overflow:visible" width="4.5" height="4.5" viewBox="0 0 4.5 4.5"><path d="M0 0.5 H4.5" stroke="#fff" stroke-width="1"/><path d="M0 2 L4.5 2 L2.25 4.5 Z" fill="#fff"/></svg>
<svg style="position:absolute;left:791.4px;top:66px;overflow:visible" width="9" height="7.5" viewBox="0 0 9 7.5"><rect x="0" y="0" width="8" height="7.5" rx="1" fill="#15301f"/><rect x="1.2" y="1.2" width="4.5" height="5" fill="#2d5a3c"/><rect x="5.5" y="2.5" width="3.5" height="3" fill="#0d1f14"/></svg>
<svg style="position:absolute;left:898px;top:67px;overflow:visible" width="10.5" height="7" viewBox="0 0 10.5 7"><rect x="0.5" y="0.5" width="9.5" height="6" fill="none" stroke="#fff" stroke-width="1"/><path d="M0.5 2 H10 M5.25 3 V6.5 M3.5 4.5 L5.25 3 L7 4.5" stroke="#fff" stroke-width="0.9" fill="none"/></svg>
<div style="position:absolute;left:934px;top:70.5px;width:8px;height:1px;background:#fff"></div>
<svg style="position:absolute;left:968px;top:67px;overflow:visible" width="8.5" height="7.5" viewBox="0 0 8.5 7.5"><rect x="0.5" y="1.8" width="6" height="5.2" fill="none" stroke="#fff" stroke-width="1"/><path d="M2 1.8 V0.5 H8 V5.5 H6.5" fill="none" stroke="#fff" stroke-width="1"/></svg>
<svg style="position:absolute;left:1003px;top:67px;overflow:visible" width="8.5" height="8" viewBox="0 0 8.5 8"><path d="M0.5 0.5 L8 7.5 M8 0.5 L0.5 7.5" stroke="#fff" stroke-width="1.1"/></svg>
<svg style="position:absolute;left:486px;top:91px;overflow:visible" width="6" height="11" viewBox="0 0 6 11"><path d="M3 0.7 Q5.5 0.7 5.5 3.5 Q5.5 5 4.3 6.5 V8 H1.7 V6.5 Q0.5 5 0.5 3.5 Q0.5 0.7 3 0.7 Z M1.8 9.7 H4.2" fill="none" stroke="#fff" stroke-width="1"/></svg>
<svg style="position:absolute;left:979.7px;top:91px;overflow:visible" width="11.5" height="10" viewBox="0 0 11.5 10"><path d="M0.5 3.5 V9.5 H9.5 V7" fill="none" stroke="#fff" stroke-width="1"/><path d="M3 8 Q3.5 3.5 8 3.5 V1 L11 4.5 L8 7.5 V5.5 Q5 5.5 3 8 Z" fill="none" stroke="#fff" stroke-width="1"/></svg>
<div style="position:absolute;left:0px;top:178px;width:1024px;height:390px;background:#e6e6e6"></div>
<div style="position:absolute;left:4px;top:185px;width:76px;height:20px;background:#fff;border:1px solid #c6c6c6;box-sizing:border-box"></div>
<div style="position:absolute;left:9.2px;top:190.07px;font-family:'Liberation Sans', sans-serif;font-weight:normal;font-size:10.2px;line-height:10.2px;color:#333;white-space:nowrap;transform:scaleX(0.8129);transform-origin:left top;">C9</div>
<div style="position:absolute;left:103px;top:185px;width:82px;height:20px;background:#fff;border:1px solid #c6c6c6;box-sizing:border-box"></div>
<div style="position:absolute;left:187px;top:185px;width:833px;height:20px;background:#fff;border:1px solid #c6c6c6;box-sizing:border-box"></div>
<svg style="position:absolute;left:70.25px;top:192.5px" width="5.5" height="3.25"><path d="M0 0 L5.5 0 L2.75 2.75 Z" fill="#777"/></svg>
<div style="position:absolute;left:91px;top:191px;width:1px;height:1.5px;background:#999"></div>
<div style="position:absolute;left:91px;top:194px;width:1px;height:1.5px;background:#999"></div>
<div style="position:absolute;left:91px;top:197px;width:1px;height:1.5px;background:#999"></div>
<svg style="position:absolute;left:113px;top:191px;overflow:visible" width="8.5" height="8.5" viewBox="0 0 8.5 8.5"><path d="M0.5 0.5 L8 8 M8 0.5 L0.5 8" stroke="#aaa" stroke-width="1"/></svg>
<svg style="position:absolute;left:139.5px;top:191px;overflow:visible" width="10" height="8" viewBox="0 0 10 8"><path d="M0.5 4 L3.5 7.3 L9.5 0.7" fill="none" stroke="#bbb" stroke-width="1.2"/></svg>
<div style="position:absolute;left:166.8px;top:188.35px;font-family:'Liberation Serif', serif;font-weight:normal;font-size:12px;line-height:12px;color:#555;white-space:nowrap;"><i>f</i><i style="font-size:9px">x</i></div>
<svg style="position:absolute;left:1011px;top:192px;overflow:visible" width="6.5" height="4" viewBox="0 0 6.5 4"><path d="M0.5 0.5 L3.25 3.5 L6 0.5" fill="none" stroke="#666" stroke-width="1.2"/></svg>
<div style="position:absolute;left:20px;top:225px;width:987px;height:343px;background:#fff"></div>
<div style="position:absolute;left:20px;top:271px;width:987px;height:1px;background:#dadada"></div>
<div style="position:absolute;left:20px;top:297px;width:987px;height:1px;background:#dadada"></div>
<div style="position:absolute;left:20px;top:312px;width:987px;height:1px;background:#dadada"></div>
<div style="position:absolute;left:20px;top:332px;width:987px;height:1px;background:#dadada"></div>
<div style="position:absolute;left:20px;top:347px;width:987px;height:1px;background:#dadada"></div>
<div style="position:absolute;left:20px;top:362px;width:987px;height:1px;background:#dadada"></div>
<div style="position:absolute;left:20px;top:377px;width:987px;height:1px;background:#dadada"></div>
<div style="position:absolute;left:20px;top:392px;width:987px;height:1px;background:#dadada"></div>
<div style="position:absolute;left:20px;top:407px;width:987px;height:1px;background:#dadada"></div>
<div style="position:absolute;left:20px;top:422px;width:987px;height:1px;background:#dadada"></div>
<div style="position:absolute;left:20px;top:437px;width:987px;height:1px;background:#dadada"></div>
<div style="position:absolute;left:20px;top:450px;width:987px;height:1px;background:#dadada"></div>
<div style="position:absolute;left:20px;top:463px;width:987px;height:1px;background:#dadada"></div>
<div style="position:absolute;left:20px;top:475px;width:987px;height:1px;background:#dadada"></div>
<div style="position:absolute;left:20px;top:489px;width:987px;height:1px;background:#dadada"></div>
<div style="position:absolute;left:20px;top:502px;width:987px;height:1px;background:#dadada"></div>
<div style="position:absolute;left:20px;top:515px;width:987px;height:1px;background:#dadada"></div>
<div style="position:absolute;left:20px;top:527px;width:987px;height:1px;background:#dadada"></div>
<div style="position:absolute;left:20px;top:540px;width:987px;height:1px;background:#dadada"></div>
<div style="position:absolute;left:20px;top:553px;width:987px;height:1px;background:#dadada"></div>
<div style="position:absolute;left:20px;top:566px;width:987px;height:1px;background:#dadada"></div>
<div style="position:absolute;left:47px;top:225px;width:1px;height:343px;background:#dadada"></div>
<div style="position:absolute;left:222px;top:225px;width:1px;height:343px;background:#dadada"></div>
<div style="position:absolute;left:287px;top:225px;width:1px;height:343px;background:#dadada"></div>
<div style="position:absolute;left:348px;top:225px;width:1px;height:343px;background:#dadada"></div>
<div style="position:absolute;left:363px;top:225px;width:1px;height:343px;background:#dadada"></div>
<div style="position:absolute;left:379px;top:225px;width:1px;height:343px;background:#dadada"></div>
<div style="position:absolute;left:557px;top:225px;width:1px;height:343px;background:#dadada"></div>
<div style="position:absolute;left:626px;top:225px;width:1px;height:343px;background:#dadada"></div>
<div style="position:absolute;left:657px;top:225px;width:1px;height:343px;background:#dadada"></div>
<div style="position:absolute;left:720px;top:225px;width:1px;height:343px;background:#dadada"></div>
<div style="position:absolute;left:783px;top:225px;width:1px;height:343px;background:#dadada"></div>
<div style="position:absolute;left:810px;top:225px;width:1px;height:343px;background:#dadada"></div>
<div style="position:absolute;left:877px;top:225px;width:1px;height:343px;background:#dadada"></div>
<div style="position:absolute;left:925px;top:225px;width:1px;height:343px;background:#dadada"></div>
<div style="position:absolute;left:973px;top:225px;width:1px;height:343px;background:#dadada"></div>
<div style="position:absolute;left:0px;top:224px;width:1007px;height:1px;background:#ababab"></div>
<div style="position:absolute;left:19px;top:212px;width:1px;height:356px;background:#bdbdbd"></div>
<div style="position:absolute;left:47px;top:212px;width:1px;height:12px;background:#c4c4c4"></div>
<div style="position:absolute;left:222px;top:212px;width:1px;height:12px;background:#c4c4c4"></div>
<div style="position:absolute;left:287px;top:212px;width:1px;height:12px;background:#c4c4c4"></div>
<div style="position:absolute;left:348px;top:212px;width:1px;height:12px;background:#c4c4c4"></div>
<div style="position:absolute;left:363px;top:212px;width:1px;height:12px;background:#c4c4c4"></div>
<div style="position:absolute;left:379px;top:212px;width:1px;height:12px;background:#c4c4c4"></div>
<div style="position:absolute;left:557px;top:212px;width:1px;height:12px;background:#c4c4c4"></div>
<div style="position:absolute;left:626px;top:212px;width:1px;height:12px;background:#c4c4c4"></div>
<div style="position:absolute;left:657px;top:212px;width:1px;height:12px;background:#c4c4c4"></div>
<div style="position:absolute;left:720px;top:212px;width:1px;height:12px;background:#c4c4c4"></div>
<div style="position:absolute;left:783px;top:212px;width:1px;height:12px;background:#c4c4c4"></div>
<div style="position:absolute;left:810px;top:212px;width:1px;height:12px;background:#c4c4c4"></div>
<div style="position:absolute;left:877px;top:212px;width:1px;height:12px;background:#c4c4c4"></div>
<div style="position:absolute;left:925px;top:212px;width:1px;height:12px;background:#c4c4c4"></div>
<div style="position:absolute;left:973px;top:212px;width:1px;height:12px;background:#c4c4c4"></div>
<div style="position:absolute;left:-266.5px;width:600px;top:214.34px;font-family:'Liberation Sans', sans-serif;font-weight:normal;font-size:10px;line-height:10px;color:#222;white-space:nowrap;text-align:center;">A</div>
<div style="position:absolute;left:-165.0px;width:600px;top:214.34px;font-family:'Liberation Sans', sans-serif;font-weight:normal;font-size:10px;line-height:10px;color:#222;white-space:nowrap;text-align:center;">B</div>
<div style="position:absolute;left:-45.0px;width:600px;top:214.34px;font-family:'Liberation Sans', sans-serif;font-weight:normal;font-size:10px;line-height:10px;color:#222;white-space:nowrap;text-align:center;">C</div>
<div style="position:absolute;left:18.0px;width:600px;top:214.34px;font-family:'Liberation Sans', sans-serif;font-weight:normal;font-size:10px;line-height:10px;color:#222;white-space:nowrap;text-align:center;">D</div>
<div style="position:absolute;left:56.0px;width:600px;top:214.34px;font-family:'Liberation Sans', sans-serif;font-weight:normal;font-size:10px;line-height:10px;color:#222;white-space:nowrap;text-align:center;">E</div>
<div style="position:absolute;left:71.5px;width:600px;top:214.34px;font-family:'Liberation Sans', sans-serif;font-weight:normal;font-size:10px;line-height:10px;color:#222;white-space:nowrap;text-align:center;">F</div>
<div style="position:absolute;left:168.5px;width:600px;top:214.34px;font-family:'Liberation Sans', sans-serif;font-weight:normal;font-size:10px;line-height:10px;color:#222;white-space:nowrap;text-align:center;">G</div>
<div style="position:absolute;left:292.0px;width:600px;top:214.34px;font-family:'Liberation Sans', sans-serif;font-weight:normal;font-size:10px;line-height:10px;color:#222;white-space:nowrap;text-align:center;">H</div>
<div style="position:absolute;left:342.0px;width:600px;top:214.34px;font-family:'Liberation Sans', sans-serif;font-weight:normal;font-size:10px;line-height:10px;color:#222;white-space:nowrap;text-align:center;">I</div>
<div style="position:absolute;left:389.0px;width:600px;top:214.34px;font-family:'Liberation Sans', sans-serif;font-weight:normal;font-size:10px;line-height:10px;color:#222;white-space:nowrap;text-align:center;">J</div>
<div style="position:absolute;left:452.0px;width:600px;top:214.34px;font-family:'Liberation Sans', sans-serif;font-weight:normal;font-size:10px;line-height:10px;color:#222;white-space:nowrap;text-align:center;">K</div>
<div style="position:absolute;left:497.0px;width:600px;top:214.34px;font-family:'Liberation Sans', sans-serif;font-weight:normal;font-size:10px;line-height:10px;color:#222;white-space:nowrap;text-align:center;">L</div>
<div style="position:absolute;left:544.0px;width:600px;top:214.34px;font-family:'Liberation Sans', sans-serif;font-weight:normal;font-size:10px;line-height:10px;color:#222;white-space:nowrap;text-align:center;">M</div>
<div style="position:absolute;left:601.5px;width:600px;top:214.34px;font-family:'Liberation Sans', sans-serif;font-weight:normal;font-size:10px;line-height:10px;color:#222;white-space:nowrap;text-align:center;">N</div>
<div style="position:absolute;left:649.5px;width:600px;top:214.34px;font-family:'Liberation Sans', sans-serif;font-weight:normal;font-size:10px;line-height:10px;color:#222;white-space:nowrap;text-align:center;">O</div>
<div style="position:absolute;left:697.2px;width:600px;top:214.34px;font-family:'Liberation Sans', sans-serif;font-weight:normal;font-size:10px;line-height:10px;color:#222;white-space:nowrap;text-align:center;">P</div>
<div style="position:absolute;left:0px;top:271px;width:19px;height:1px;background:#cdcdcd"></div>
<div style="position:absolute;left:0px;top:297px;width:19px;height:1px;background:#cdcdcd"></div>
<div style="position:absolute;left:0px;top:312px;width:19px;height:1px;background:#cdcdcd"></div>
<div style="position:absolute;left:0px;top:332px;width:19px;height:1px;background:#cdcdcd"></div>
<div style="position:absolute;left:0px;top:347px;width:19px;height:1px;background:#cdcdcd"></div>
<div style="position:absolute;left:0px;top:362px;width:19px;height:1px;background:#cdcdcd"></div>
<div style="position:absolute;left:0px;top:377px;width:19px;height:1px;background:#cdcdcd"></div>
<div style="position:absolute;left:0px;top:392px;width:19px;height:1px;background:#cdcdcd"></div>
<div style="position:absolute;left:0px;top:407px;width:19px;height:1px;background:#cdcdcd"></div>
<div style="position:absolute;left:0px;top:422px;width:19px;height:1px;background:#cdcdcd"></div>
<div style="position:absolute;left:0px;top:437px;width:19px;height:1px;background:#cdcdcd"></div>
<div style="position:absolute;left:0px;top:450px;width:19px;height:1px;background:#cdcdcd"></div>
<div style="position:absolute;left:0px;top:463px;width:19px;height:1px;background:#cdcdcd"></div>
<div style="position:absolute;left:0px;top:475px;width:19px;height:1px;background:#cdcdcd"></div>
<div style="position:absolute;left:0px;top:489px;width:19px;height:1px;background:#cdcdcd"></div>
<div style="position:absolute;left:0px;top:502px;width:19px;height:1px;background:#cdcdcd"></div>
<div style="position:absolute;left:0px;top:515px;width:19px;height:1px;background:#cdcdcd"></div>
<div style="position:absolute;left:0px;top:527px;width:19px;height:1px;background:#cdcdcd"></div>
<div style="position:absolute;left:0px;top:540px;width:19px;height:1px;background:#cdcdcd"></div>
<div style="position:absolute;left:0px;top:553px;width:19px;height:1px;background:#cdcdcd"></div>
<div style="position:absolute;left:0px;top:566px;width:19px;height:1px;background:#cdcdcd"></div>
<div style="position:absolute;left:-290.4px;width:600px;top:260.78px;font-family:'Liberation Sans', sans-serif;font-weight:normal;font-size:10.3px;line-height:10.3px;color:#222;white-space:nowrap;text-align:center;transform:scaleX(0.9300);transform-origin:center top;">1</div>
<div style="position:absolute;left:-290.4px;width:600px;top:286.98px;font-family:'Liberation Sans', sans-serif;font-weight:normal;font-size:10.3px;line-height:10.3px;color:#222;white-space:nowrap;text-align:center;transform:scaleX(0.9300);transform-origin:center top;">2</div>
<div style="position:absolute;left:-290.4px;width:600px;top:299.18px;font-family:'Liberation Sans', sans-serif;font-weight:normal;font-size:10.3px;line-height:10.3px;color:#222;white-space:nowrap;text-align:center;transform:scaleX(0.9300);transform-origin:center top;">3</div>
<div style="position:absolute;left:-290.4px;width:600px;top:319.58px;font-family:'Liberation Sans', sans-serif;font-weight:normal;font-size:10.3px;line-height:10.3px;color:#222;white-space:nowrap;text-align:center;transform:scaleX(0.9300);transform-origin:center top;">4</div>
<div style="position:absolute;left:-290.4px;width:600px;top:335.58px;font-family:'Liberation Sans', sans-serif;font-weight:normal;font-size:10.3px;line-height:10.3px;color:#222;white-space:nowrap;text-align:center;transform:scaleX(0.9300);transform-origin:center top;">5</div>
<div style="position:absolute;left:-290.4px;width:600px;top:350.58px;font-family:'Liberation Sans', sans-serif;font-weight:normal;font-size:10.3px;line-height:10.3px;color:#222;white-space:nowrap;text-align:center;transform:scaleX(0.9300);transform-origin:center top;">6</div>
<div style="position:absolute;left:-290.4px;width:600px;top:365.68px;font-family:'Liberation Sans', sans-serif;font-weight:normal;font-size:10.3px;line-height:10.3px;color:#222;white-space:nowrap;text-align:center;transform:scaleX(0.9300);transform-origin:center top;">7</div>
<div style="position:absolute;left:-290.4px;width:600px;top:380.78px;font-family:'Liberation Sans', sans-serif;font-weight:normal;font-size:10.3px;line-height:10.3px;color:#222;white-space:nowrap;text-align:center;transform:scaleX(0.9300);transform-origin:center top;">8</div>
<div style="position:absolute;left:-290.4px;width:600px;top:410.98px;font-family:'Liberation Sans', sans-serif;font-weight:normal;font-size:10.3px;line-height:10.3px;color:#222;white-space:nowrap;text-align:center;transform:scaleX(0.9300);transform-origin:center top;">10</div>
<div style="position:absolute;left:-290.4px;width:600px;top:426.08px;font-family:'Liberation Sans', sans-serif;font-weight:normal;font-size:10.3px;line-height:10.3px;color:#222;white-space:nowrap;text-align:center;transform:scaleX(0.9300);transform-origin:center top;">11</div>
<div style="position:absolute;left:-290.4px;width:600px;top:439.78px;font-family:'Liberation Sans', sans-serif;font-weight:normal;font-size:10.3px;line-height:10.3px;color:#222;white-space:nowrap;text-align:center;transform:scaleX(0.9300);transform-origin:center top;">12</div>
<div style="position:absolute;left:-290.4px;width:600px;top:453.08px;font-family:'Liberation Sans', sans-serif;font-weight:normal;font-size:10.3px;line-height:10.3px;color:#222;white-space:nowrap;text-align:center;transform:scaleX(0.9300);transform-origin:center top;">13</div>
<div style="position:absolute;left:-290.4px;width:600px;top:464.68px;font-family:'Liberation Sans', sans-serif;font-weight:normal;font-size:10.3px;line-height:10.3px;color:#222;white-space:nowrap;text-align:center;transform:scaleX(0.9300);transform-origin:center top;">14</div>
<div style="position:absolute;left:-290.4px;width:600px;top:478.58px;font-family:'Liberation Sans', sans-serif;font-weight:normal;font-size:10.3px;line-height:10.3px;color:#222;white-space:nowrap;text-align:center;transform:scaleX(0.9300);transform-origin:center top;">15</div>
<div style="position:absolute;left:-290.4px;width:600px;top:490.78px;font-family:'Liberation Sans', sans-serif;font-weight:normal;font-size:10.3px;line-height:10.3px;color:#222;white-space:nowrap;text-align:center;transform:scaleX(0.9300);transform-origin:center top;">16</div>
<div style="position:absolute;left:-290.4px;width:600px;top:504.78px;font-family:'Liberation Sans', sans-serif;font-weight:normal;font-size:10.3px;line-height:10.3px;color:#222;white-space:nowrap;text-align:center;transform:scaleX(0.9300);transform-origin:center top;">17</div>
<div style="position:absolute;left:-290.4px;width:600px;top:517.38px;font-family:'Liberation Sans', sans-serif;font-weight:normal;font-size:10.3px;line-height:10.3px;color:#222;white-space:nowrap;text-align:center;transform:scaleX(0.9300);transform-origin:center top;">18</div>
<div style="position:absolute;left:-290.4px;width:600px;top:529.98px;font-family:'Liberation Sans', sans-serif;font-weight:normal;font-size:10.3px;line-height:10.3px;color:#222;white-space:nowrap;text-align:center;transform:scaleX(0.9300);transform-origin:center top;">19</div>
<div style="position:absolute;left:-290.4px;width:600px;top:542.58px;font-family:'Liberation Sans', sans-serif;font-weight:normal;font-size:10.3px;line-height:10.3px;color:#222;white-space:nowrap;text-align:center;transform:scaleX(0.9300);transform-origin:center top;">20</div>
<div style="position:absolute;left:-290.4px;width:600px;top:555.58px;font-family:'Liberation Sans', sans-serif;font-weight:normal;font-size:10.3px;line-height:10.3px;color:#222;white-space:nowrap;text-align:center;transform:scaleX(0.9300);transform-origin:center top;">21</div>
<svg style="position:absolute;left:10px;top:215px" width="7" height="7"><path d="M7 0 L7 7 L0 7 Z" fill="#bdbdbd"/></svg>
<div style="position:absolute;left:222px;top:212px;width:65px;height:11px;background:#d2d2d2"></div>
<div style="position:absolute;left:222px;top:223px;width:65px;height:2px;background:#217346"></div>
<div style="position:absolute;left:-45.0px;width:600px;top:214.34px;font-family:'Liberation Sans', sans-serif;font-weight:normal;font-size:10px;line-height:10px;color:#217346;white-space:nowrap;text-align:center;">C</div>
<div style="position:absolute;left:0px;top:392px;width:19px;height:16px;background:#d2d2d2"></div>
<div style="position:absolute;left:0px;top:392px;width:19px;height:1px;background:#bdbdbd"></div>
<div style="position:absolute;left:0px;top:407px;width:19px;height:1px;background:#bdbdbd"></div>
<div style="position:absolute;left:17.6px;top:392px;width:1.6px;height:16px;background:#217346"></div>
<div style="position:absolute;left:-290.4px;width:600px;top:395.88px;font-family:'Liberation Sans', sans-serif;font-weight:normal;font-size:10.3px;line-height:10.3px;color:#217346;white-space:nowrap;text-align:center;transform:scaleX(0.9300);transform-origin:center top;">9</div>
<div style="position:absolute;left:0px;top:567px;width:1007px;height:1px;background:#a8a8a8"></div>
<div style="position:absolute;left:47px;top:225px;width:317px;height:47px;background:#ffff99"></div>
<div style="position:absolute;left:52.5px;top:235.97px;font-family:'Liberation Sans', sans-serif;font-weight:bold;font-size:10.2px;line-height:10.2px;color:#ff0000;white-space:nowrap;transform:scaleX(0.9697);transform-origin:left top;">Note:&nbsp; Enter all amouts as positive numbers.&nbsp; The worksheet is</div>
<div style="position:absolute;left:49.4px;top:248.57px;font-family:'Liberation Sans', sans-serif;font-weight:bold;font-size:10.2px;line-height:10.2px;color:#ff0000;white-space:nowrap;transform:scaleX(0.9683);transform-origin:left top;">formatted to add debits to assets and expenses and add credits to</div>
<div style="position:absolute;left:49.6px;top:261.67px;font-family:'Liberation Sans', sans-serif;font-weight:bold;font-size:10.2px;line-height:10.2px;color:#ff0000;white-space:nowrap;transform:scaleX(0.9875);transform-origin:left top;">liabilities, equities and revenues</div>
<div style="position:absolute;left:222px;top:298px;width:1px;height:14px;background:#fff"></div>
<div style="position:absolute;left:49.8px;top:298.23px;font-family:'Liberation Sans', sans-serif;font-weight:bold;font-size:10.6px;line-height:10.6px;color:#000;white-space:nowrap;transform:scaleX(0.9260);transform-origin:left top;">Worksheet Journal Entries to Convert</div>
<div style="position:absolute;left:49.8px;top:319.33px;font-family:'Liberation Sans', sans-serif;font-weight:bold;font-size:10.6px;line-height:10.6px;color:#000;white-space:nowrap;transform:scaleX(0.9211);transform-origin:left top;">to the Accrual basis of Accounting</div>
<div style="position:absolute;left:-45.599999999999994px;width:600px;top:319.33px;font-family:'Liberation Sans', sans-serif;font-weight:bold;font-size:10.6px;line-height:10.6px;color:#000;white-space:nowrap;text-align:center;transform:scaleX(0.9338);transform-origin:center top;">debit $</div>
<div style="position:absolute;left:17.600000000000023px;width:600px;top:319.33px;font-family:'Liberation Sans', sans-serif;font-weight:bold;font-size:10.6px;line-height:10.6px;color:#000;white-space:nowrap;text-align:center;transform:scaleX(0.9362);transform-origin:center top;">credit $</div>
<div style="position:absolute;left:20px;top:332px;width:344px;height:1px;background:#000"></div>
<div style="position:absolute;left:379px;top:272px;width:499px;height:40px;background:#c0c0c0"></div>
<div style="position:absolute;left:379px;top:311px;width:499px;height:1px;background:#8a8a8a"></div>
<div style="position:absolute;left:292.70000000000005px;width:600px;top:272.53px;font-family:'Liberation Sans', sans-serif;font-weight:bold;font-size:11.3px;line-height:11.3px;color:#000;white-space:nowrap;text-align:center;transform:scaleX(0.8746);transform-origin:center top;">Gov'tal Fund</div>
<div style="position:absolute;left:292.20000000000005px;width:600px;top:285.63px;font-family:'Liberation Sans', sans-serif;font-weight:bold;font-size:11.3px;line-height:11.3px;color:#000;white-space:nowrap;text-align:center;transform:scaleX(0.8665);transform-origin:center top;">Balances</div>
<div style="position:absolute;left:545.2px;width:600px;top:272.53px;font-family:'Liberation Sans', sans-serif;font-weight:bold;font-size:11.3px;line-height:11.3px;color:#000;white-space:nowrap;text-align:center;transform:scaleX(0.8757);transform-origin:center top;">Balances for</div>
<div style="position:absolute;left:543.7px;width:600px;top:285.63px;font-family:'Liberation Sans', sans-serif;font-weight:bold;font-size:11.3px;line-height:11.3px;color:#000;white-space:nowrap;text-align:center;transform:scaleX(0.8725);transform-origin:center top;">Gov't-wide</div>
<div style="position:absolute;left:388.5px;width:600px;top:297.79px;font-family:'Liberation Sans', sans-serif;font-weight:bold;font-size:11px;line-height:11px;color:#000;white-space:nowrap;text-align:center;transform:scaleX(0.8626);transform-origin:center top;">Debits</div>
<div style="position:absolute;left:451.6px;width:600px;top:297.79px;font-family:'Liberation Sans', sans-serif;font-weight:bold;font-size:11px;line-height:11px;color:#000;white-space:nowrap;text-align:center;transform:scaleX(0.8655);transform-origin:center top;">Credits</div>
<div style="position:absolute;left:662px;top:309px;width:53px;height:1px;background:#333"></div>
<div style="position:absolute;left:725px;top:309px;width:53px;height:1px;background:#333"></div>
<div style="position:absolute;left:380px;top:313px;width:497px;height:253px;background:#fff"></div>
<div style="position:absolute;left:380px;top:451px;width:497px;height:25px;background:#daeef3"></div>
<div style="position:absolute;left:627px;top:313px;width:30px;height:253px;background:#c0c0c0"></div>
<div style="position:absolute;left:783px;top:313px;width:27px;height:253px;background:#c0c0c0"></div>
<div style="position:absolute;left:657px;top:313px;width:1px;height:253px;background:#808080"></div>
<div style="position:absolute;left:810px;top:313px;width:1px;height:253px;background:#808080"></div>
<div style="position:absolute;left:782px;top:313px;width:1px;height:253px;background:#808080"></div>
<div style="position:absolute;left:379px;top:312px;width:1px;height:254px;background:#000"></div>
<div style="position:absolute;left:557px;top:312px;width:1px;height:254px;background:#000"></div>
<div style="position:absolute;left:626px;top:312px;width:1px;height:254px;background:#000"></div>
<div style="position:absolute;left:877px;top:312px;width:1px;height:254px;background:#000"></div>
<div style="position:absolute;left:657px;top:312px;width:1px;height:254px;background:#000"></div>
<div style="position:absolute;left:720px;top:313px;width:1px;height:253px;background:repeating-linear-gradient(#888 0 1px, transparent 1px 2px)"></div>
<div style="position:absolute;left:379px;top:332px;width:499px;height:1px;background:#000"></div>
<div style="position:absolute;left:379px;top:347px;width:499px;height:1px;background:#000"></div>
<div style="position:absolute;left:379px;top:362px;width:499px;height:1px;background:#000"></div>
<div style="position:absolute;left:379px;top:377px;width:499px;height:1px;background:#000"></div>
<div style="position:absolute;left:379px;top:392px;width:499px;height:1px;background:#000"></div>
<div style="position:absolute;left:379px;top:407px;width:499px;height:1px;background:#000"></div>
<div style="position:absolute;left:379px;top:422px;width:499px;height:1px;background:#000"></div>
<div style="position:absolute;left:379px;top:437px;width:499px;height:1px;background:#000"></div>
<div style="position:absolute;left:379px;top:450px;width:499px;height:1px;background:#000"></div>
<div style="position:absolute;left:379px;top:475px;width:499px;height:1px;background:#000"></div>
<div style="position:absolute;left:379px;top:489px;width:499px;height:1px;background:#000"></div>
<div style="position:absolute;left:379px;top:502px;width:499px;height:1px;background:#000"></div>
<div style="position:absolute;left:379px;top:515px;width:499px;height:1px;background:#000"></div>
<div style="position:absolute;left:379px;top:527px;width:499px;height:1px;background:#000"></div>
<div style="position:absolute;left:379px;top:540px;width:499px;height:1px;background:#000"></div>
<div style="position:absolute;left:379px;top:553px;width:499px;height:1px;background:#000"></div>
<div style="position:absolute;left:379px;top:451px;width:499px;height:1px;background:#666"></div>
<div style="position:absolute;left:379px;top:474px;width:499px;height:1px;background:#666"></div>
<div style="position:absolute;left:876px;top:451px;width:1px;height:24px;background:#666"></div>
<div style="position:absolute;left:168.8px;width:600px;top:314.65px;font-family:'Liberation Sans', sans-serif;font-weight:bold;font-size:15.3px;line-height:15.3px;color:#000;white-space:nowrap;text-align:center;transform:scaleX(0.9918);transform-origin:center top;">DEBITS:</div>
<div style="position:absolute;left:381.6px;top:334.99px;font-family:'Liberation Serif', serif;font-weight:normal;font-size:11.6px;line-height:11.6px;color:#000;white-space:nowrap;transform:scaleX(0.9698);transform-origin:left top;">Cash</div>
<div style="position:absolute;right:403.5px;top:335.84px;font-family:'Liberation Sans', sans-serif;font-weight:normal;font-size:10px;line-height:10px;color:#000;white-space:nowrap;text-align:right;transform:scaleX(0.9670);transform-origin:right top;">8,161,351</div>
<div style="position:absolute;right:152px;top:335.84px;font-family:'Liberation Sans', sans-serif;font-weight:normal;font-size:10px;line-height:10px;color:#000;white-space:nowrap;text-align:right;transform:scaleX(0.9670);transform-origin:right top;">8,161,351</div>
<div style="position:absolute;left:381.6px;top:349.99px;font-family:'Liberation Serif', serif;font-weight:normal;font-size:11.6px;line-height:11.6px;color:#000;white-space:nowrap;transform:scaleX(0.9419);transform-origin:left top;">Investments</div>
<div style="position:absolute;right:403.5px;top:350.84px;font-family:'Liberation Sans', sans-serif;font-weight:normal;font-size:10px;line-height:10px;color:#000;white-space:nowrap;text-align:right;transform:scaleX(0.9670);transform-origin:right top;">3,312,992</div>
<div style="position:absolute;right:152px;top:350.84px;font-family:'Liberation Sans', sans-serif;font-weight:normal;font-size:10px;line-height:10px;color:#000;white-space:nowrap;text-align:right;transform:scaleX(0.9670);transform-origin:right top;">3,312,992</div>
<div style="position:absolute;left:381.6px;top:364.99px;font-family:'Liberation Serif', serif;font-weight:normal;font-size:11.6px;line-height:11.6px;color:#000;white-space:nowrap;transform:scaleX(0.9218);transform-origin:left top;">Inventories</div>
<div style="position:absolute;right:403.5px;top:365.84px;font-family:'Liberation Sans', sans-serif;font-weight:normal;font-size:10px;line-height:10px;color:#000;white-space:nowrap;text-align:right;transform:scaleX(0.9670);transform-origin:right top;">33,126</div>
<div style="position:absolute;right:152px;top:365.84px;font-family:'Liberation Sans', sans-serif;font-weight:normal;font-size:10px;line-height:10px;color:#000;white-space:nowrap;text-align:right;transform:scaleX(0.9670);transform-origin:right top;">33,126</div>
<div style="position:absolute;left:381.6px;top:379.99px;font-family:'Liberation Serif', serif;font-weight:normal;font-size:11.6px;line-height:11.6px;color:#000;white-space:nowrap;transform:scaleX(0.9630);transform-origin:left top;">Taxes Receivable</div>
<div style="position:absolute;right:403.5px;top:380.84px;font-family:'Liberation Sans', sans-serif;font-weight:normal;font-size:10px;line-height:10px;color:#000;white-space:nowrap;text-align:right;transform:scaleX(0.9670);transform-origin:right top;">2,872,611</div>
<div style="position:absolute;right:152px;top:380.84px;font-family:'Liberation Sans', sans-serif;font-weight:normal;font-size:10px;line-height:10px;color:#000;white-space:nowrap;text-align:right;transform:scaleX(0.9670);transform-origin:right top;">2,872,611</div>
<div style="position:absolute;left:381.6px;top:394.99px;font-family:'Liberation Serif', serif;font-weight:normal;font-size:11.6px;line-height:11.6px;color:#000;white-space:nowrap;transform:scaleX(0.9498);transform-origin:left top;">Accounts Receivable</div>
<div style="position:absolute;right:403.5px;top:395.84px;font-family:'Liberation Sans', sans-serif;font-weight:normal;font-size:10px;line-height:10px;color:#000;white-space:nowrap;text-align:right;transform:scaleX(0.9670);transform-origin:right top;">693,392</div>
<div style="position:absolute;right:152px;top:395.84px;font-family:'Liberation Sans', sans-serif;font-weight:normal;font-size:10px;line-height:10px;color:#000;white-space:nowrap;text-align:right;transform:scaleX(0.9670);transform-origin:right top;">693,392</div>
<div style="position:absolute;left:381.6px;top:409.99px;font-family:'Liberation Serif', serif;font-weight:normal;font-size:11.6px;line-height:11.6px;color:#000;white-space:nowrap;transform:scaleX(0.9440);transform-origin:left top;">Due from other governments</div>
<div style="position:absolute;right:403.5px;top:410.84px;font-family:'Liberation Sans', sans-serif;font-weight:normal;font-size:10px;line-height:10px;color:#000;white-space:nowrap;text-align:right;transform:scaleX(0.9670);transform-origin:right top;">1,328,448</div>
<div style="position:absolute;right:152px;top:410.84px;font-family:'Liberation Sans', sans-serif;font-weight:normal;font-size:10px;line-height:10px;color:#000;white-space:nowrap;text-align:right;transform:scaleX(0.9670);transform-origin:right top;">1,328,448</div>
<div style="position:absolute;left:381.6px;top:424.99px;font-family:'Liberation Serif', serif;font-weight:normal;font-size:11.6px;line-height:11.6px;color:#000;white-space:nowrap;transform:scaleX(0.9871);transform-origin:left top;">Other Assets</div>
<div style="position:absolute;right:403.5px;top:425.84px;font-family:'Liberation Sans', sans-serif;font-weight:normal;font-size:10px;line-height:10px;color:#000;white-space:nowrap;text-align:right;transform:scaleX(0.9670);transform-origin:right top;">23,747</div>
<div style="position:absolute;right:152px;top:425.84px;font-family:'Liberation Sans', sans-serif;font-weight:normal;font-size:10px;line-height:10px;color:#000;white-space:nowrap;text-align:right;transform:scaleX(0.9670);transform-origin:right top;">23,747</div>
<div style="position:absolute;left:384.7px;top:439.90px;font-family:'Liberation Serif', serif;font-weight:normal;font-size:9.2px;line-height:9.2px;color:#000;white-space:nowrap;transform:scaleX(1.0709);transform-origin:left top;">Investments in Permanent Endowment</div>
<div style="position:absolute;right:403.5px;top:439.84px;font-family:'Liberation Sans', sans-serif;font-weight:normal;font-size:10px;line-height:10px;color:#000;white-space:nowrap;text-align:right;transform:scaleX(0.9370);transform-origin:right top;">3,875,600</div>
<div style="position:absolute;right:152px;top:439.84px;font-family:'Liberation Sans', sans-serif;font-weight:normal;font-size:10px;line-height:10px;color:#000;white-space:nowrap;text-align:right;transform:scaleX(0.9370);transform-origin:right top;">3,875,600</div>
<div style="position:absolute;left:385px;top:452.23px;font-family:'Liberation Sans', sans-serif;font-weight:bold;font-size:11.3px;line-height:11.3px;color:#000;white-space:nowrap;transform:scaleX(0.8678);transform-origin:left top;">Capital Assets - net of accumulated</div>
<div style="position:absolute;left:381.9px;top:464.83px;font-family:'Liberation Sans', sans-serif;font-weight:bold;font-size:11.3px;line-height:11.3px;color:#000;white-space:nowrap;transform:scaleX(0.8768);transform-origin:left top;">depreciation (two rows)</div>
<div style="position:absolute;right:403px;top:464.84px;font-family:'Liberation Sans', sans-serif;font-weight:normal;font-size:10px;line-height:10px;color:#000;white-space:nowrap;text-align:right;">-</div>
<div style="position:absolute;right:152px;top:464.84px;font-family:'Liberation Sans', sans-serif;font-weight:normal;font-size:10px;line-height:10px;color:#000;white-space:nowrap;text-align:right;">-</div>
<div style="position:absolute;left:385px;top:491.33px;font-family:'Liberation Sans', sans-serif;font-weight:bold;font-size:11.3px;line-height:11.3px;color:#000;white-space:nowrap;transform:scaleX(0.8654);transform-origin:left top;">Expenditures (expenses) Current</div>
<div style="position:absolute;left:384.6px;top:504.58px;font-family:'Liberation Sans', sans-serif;font-weight:normal;font-size:10.3px;line-height:10.3px;color:#000;white-space:nowrap;transform:scaleX(0.9149);transform-origin:left top;">General Government</div>
<div style="position:absolute;right:403.5px;top:504.83px;font-family:'Liberation Sans', sans-serif;font-weight:normal;font-size:10px;line-height:10px;color:#000;white-space:nowrap;text-align:right;transform:scaleX(0.9670);transform-origin:right top;">3,074,532</div>
<div style="position:absolute;right:152px;top:504.83px;font-family:'Liberation Sans', sans-serif;font-weight:normal;font-size:10px;line-height:10px;color:#000;white-space:nowrap;text-align:right;transform:scaleX(0.9670);transform-origin:right top;">3,074,532</div>
<div style="position:absolute;left:384.6px;top:517.58px;font-family:'Liberation Sans', sans-serif;font-weight:normal;font-size:10.3px;line-height:10.3px;color:#000;white-space:nowrap;transform:scaleX(0.9479);transform-origin:left top;">Judicial Administration</div>
<div style="position:absolute;right:403.5px;top:517.83px;font-family:'Liberation Sans', sans-serif;font-weight:normal;font-size:10px;line-height:10px;color:#000;white-space:nowrap;text-align:right;transform:scaleX(0.9670);transform-origin:right top;">4,400,325</div>
<div style="position:absolute;right:152px;top:517.83px;font-family:'Liberation Sans', sans-serif;font-weight:normal;font-size:10px;line-height:10px;color:#000;white-space:nowrap;text-align:right;transform:scaleX(0.9670);transform-origin:right top;">4,400,325</div>
<div style="position:absolute;left:384.6px;top:530.08px;font-family:'Liberation Sans', sans-serif;font-weight:normal;font-size:10.3px;line-height:10.3px;color:#000;white-space:nowrap;transform:scaleX(0.9565);transform-origin:left top;">Public Safety</div>
<div style="position:absolute;right:403.5px;top:530.33px;font-family:'Liberation Sans', sans-serif;font-weight:normal;font-size:10px;line-height:10px;color:#000;white-space:nowrap;text-align:right;transform:scaleX(0.9670);transform-origin:right top;">6,328,125</div>
<div style="position:absolute;right:152px;top:530.33px;font-family:'Liberation Sans', sans-serif;font-weight:normal;font-size:10px;line-height:10px;color:#000;white-space:nowrap;text-align:right;transform:scaleX(0.9670);transform-origin:right top;">6,328,125</div>
<div style="position:absolute;left:384.6px;top:543.08px;font-family:'Liberation Sans', sans-serif;font-weight:normal;font-size:10.3px;line-height:10.3px;color:#000;white-space:nowrap;transform:scaleX(0.9648);transform-origin:left top;">Public Works</div>
<div style="position:absolute;right:403.5px;top:543.33px;font-family:'Liberation Sans', sans-serif;font-weight:normal;font-size:10px;line-height:10px;color:#000;white-space:nowrap;text-align:right;transform:scaleX(0.9670);transform-origin:right top;">4,625,425</div>
<div style="position:absolute;right:152px;top:543.33px;font-family:'Liberation Sans', sans-serif;font-weight:normal;font-size:10px;line-height:10px;color:#000;white-space:nowrap;text-align:right;transform:scaleX(0.9670);transform-origin:right top;">4,625,425</div>
<div style="position:absolute;left:384.6px;top:556.08px;font-family:'Liberation Sans', sans-serif;font-weight:normal;font-size:10.3px;line-height:10.3px;color:#000;white-space:nowrap;transform:scaleX(0.9320);transform-origin:left top;">Health and Welfare</div>
<div style="position:absolute;right:403.5px;top:556.33px;font-family:'Liberation Sans', sans-serif;font-weight:normal;font-size:10px;line-height:10px;color:#000;white-space:nowrap;text-align:right;transform:scaleX(0.9670);transform-origin:right top;">4,418,294</div>
<div style="position:absolute;right:152px;top:556.33px;font-family:'Liberation Sans', sans-serif;font-weight:normal;font-size:10px;line-height:10px;color:#000;white-space:nowrap;text-align:right;transform:scaleX(0.9670);transform-origin:right top;">4,418,294</div>
<div style="position:absolute;left:221px;top:391px;width:67px;height:17px;border:2px solid #217346;box-sizing:border-box"></div>
<div style="position:absolute;left:284px;top:403.5px;width:6px;height:6px;background:#217346;border:1px solid #fff;box-sizing:border-box"></div>
<div style="position:absolute;left:1007px;top:212px;width:17px;height:356px;background:#e6e6e6"></div>
<div style="position:absolute;left:1010px;top:225px;width:11px;height:343px;background:#dadada"></div>
<div style="position:absolute;left:1010px;top:213px;width:12px;height:12px;background:#fff;border:1px solid #d0d0d0;box-sizing:border-box"></div>
<div style="position:absolute;left:1010px;top:224px;width:12px;height:71px;background:#fff;border:1px solid #c8c8c8;box-sizing:border-box"></div>
<div style="position:absolute;left:1007px;top:224px;width:1px;height:344px;background:#c4c4c4"></div>
<div style="position:absolute;left:1010px;top:557px;width:12px;height:11px;background:#fff;border:1px solid #d0d0d0;box-sizing:border-box"></div>
<svg style="position:absolute;left:1013.8px;top:218px;overflow:visible" width="4.5" height="2.8" viewBox="0 0 4.5 2.8"><path d="M0 2.8 L4.5 2.8 L2.25 0 Z" fill="#666"/></svg>
<svg style="position:absolute;left:1013.5px;top:561px;overflow:visible" width="5" height="3" viewBox="0 0 5 3"><path d="M0 0 L5 0 L2.5 3 Z" fill="#666"/></svg>
</body></html>
